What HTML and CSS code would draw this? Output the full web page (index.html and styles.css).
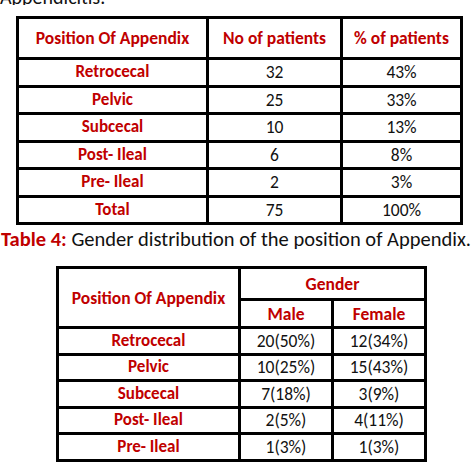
FILE: index.html
```html
<!DOCTYPE html>
<html>
<head>
<meta charset="utf-8">
<link rel="stylesheet" href="styles.css">
</head>
<body>
<div class="page">
  <div class="clip"><div class="cliptext">Appendicitis.</div></div>

  <table class="t1">
    <tr class="head">
      <th class="c1">Position Of Appendix</th>
      <th class="c2">No of patients</th>
      <th class="c3">% of patients</th>
    </tr>
    <tr><th>Retrocecal</th><td>32</td><td>43%</td></tr>
    <tr><th>Pelvic</th><td>25</td><td>33%</td></tr>
    <tr><th>Subcecal</th><td>10</td><td>13%</td></tr>
    <tr><th>Post- Ileal</th><td>6</td><td>8%</td></tr>
    <tr><th>Pre- Ileal</th><td>2</td><td>3%</td></tr>
    <tr><th>Total</th><td>75</td><td>100%</td></tr>
  </table>

  <p class="caption"><span class="lbl">Table 4:</span> Gender distribution of the position of Appendix.</p>

  <table class="t2">
    <tr class="h1">
      <th class="c1 hd" rowspan="2">Position Of Appendix</th>
      <th colspan="2" class="gender hd">Gender</th>
    </tr>
    <tr class="h2">
      <th class="c2 hd">Male</th>
      <th class="c3 hd">Female</th>
    </tr>
    <tr><th>Retrocecal</th><td>20(50%)</td><td>12(34%)</td></tr>
    <tr><th>Pelvic</th><td>10(25%)</td><td>15(43%)</td></tr>
    <tr><th>Subcecal</th><td>7(18%)</td><td>3(9%)</td></tr>
    <tr><th>Post- Ileal</th><td>2(5%)</td><td>4(11%)</td></tr>
    <tr><th>Pre- Ileal</th><td>1(3%)</td><td>1(3%)</td></tr>
  </table>
</div>
</body>
</html>
```

FILE: styles.css
```css
html, body {
  margin: 0;
  padding: 0;
  background: #ffffff;
}

body {
  font-family: Carlito, Lato, "Liberation Sans", sans-serif;
  color: #111111;
  overflow: hidden;
}

.page {
  width: 474px;
  height: 464px;
  overflow: hidden;
}

.clip {
  height: 5px;
  overflow: hidden;
}

.cliptext {
  font-size: 20px;
  line-height: 22px;
  margin-top: -14px;
  color: #111;
}

table {
  border-collapse: separate;
  border-spacing: 0;
  border-left: 3px solid #000;
  border-top: 3px solid #000;
}

th, td {
  border-right: 3px solid #000;
  border-bottom: 3px solid #000;
  padding: 0;
  text-align: center;
  vertical-align: middle;
  line-height: 20px;
  white-space: nowrap;
}

th {
  color: #c00000;
  font-weight: bold;
  font-size: 17px;
}

td {
  font-weight: normal;
  font-size: 17.5px;
  color: #111;
}

.t1 {
  margin: 11px 0 0 16px;
  width: 447px;
  table-layout: fixed;
}

.t1 .c1 { width: 187px; }
.t1 .c2 { width: 131px; }
.t1 .c3 { width: 117px; }

.t1 tr th, .t1 tr td { height: 24.5px; }
.t1 tr.head th { height: 38px; font-size: 17.5px; }

.caption {
  margin: 2px 0 0 1px;
  font-size: 20.5px;
  line-height: 24px;
  white-space: nowrap;
  color: #111;
}

.caption .lbl {
  color: #c00000;
  font-weight: bold;
}

.t2 {
  margin: 15px 0 0 56px;
  width: 371px;
  table-layout: fixed;
}

.t2 .c1 { width: 179px; }
.t2 .c2 { width: 91px; }
.t2 .c3 { width: 89px; }

.t2 tr th, .t2 tr td { height: 23.5px; }
.t2 th.hd { font-size: 17.5px; }
.t2 tr.h1 th.gender { height: 29px; }
.t2 tr.h2 th { height: 25px; }
```
